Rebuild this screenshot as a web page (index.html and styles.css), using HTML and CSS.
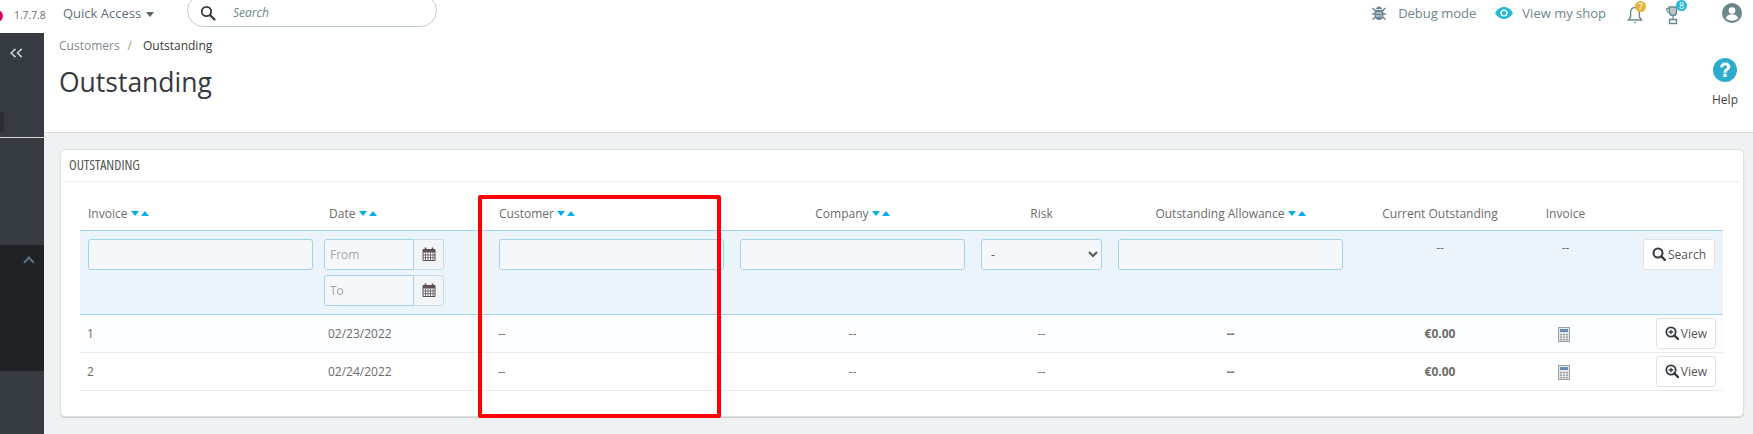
FILE: index.html
```html
<!DOCTYPE html>
<html lang="en">
<head>
<meta charset="utf-8">
<title>Outstanding</title>
<link rel="stylesheet" href="styles.css">
</head>
<body>
<div class="app">
  <header class="topbar">
    <span class="logo"></span>
    <span class="version">1.7.7.8</span>
    <span class="quick">Quick Access<span class="caret"></span></span>
    <div class="searchbox">
      <svg class="searchicon" viewBox="0 0 16 16"><circle cx="6.5" cy="6.5" r="4.7" fill="none" stroke="#363a41" stroke-width="1.8"/><path d="M10 10l4.5 4.5" stroke="#363a41" stroke-width="2.2" stroke-linecap="round"/></svg>
      <span class="searchtext">Search</span>
    </div>
    <div class="topright">
      <span class="toplink debug">
        <svg class="ico16" viewBox="0 0 16 16"><path d="M4.800 4.200C5.300 2.500 6.500 1.500 8 1.500s2.700 1 3.200 2.700z" fill="#6c868e"/><path d="M3.600 5h8.800v5.500c0 2.700-1.900 4.500-4.400 4.500s-4.400-1.800-4.400-4.500z" fill="#6c868e"/><path d="M1.500 3l3 2.500M14.500 3l-3 2.500M1 9h3M15 9h-3M1.500 14.500l3-2.500M14.500 14.500l-3-2.500" stroke="#6c868e" stroke-width="1.600"/><path d="M5 8h6M5 11h6" stroke="#fff" stroke-width=".8"/></svg>
        Debug mode
      </span>
      <span class="toplink shop">
        <svg class="ico18" viewBox="0 0 18 12"><path d="M0 6c2-3.600 5.200-6 9-6s7 2.400 9 6c-2 3.600-5.200 6-9 6s-7-2.400-9-6z" fill="#25b9d7"/><circle cx="9" cy="6" r="3.600" fill="#fff"/><circle cx="9" cy="6" r="2.200" fill="#25b9d7"/></svg>
        View my shop
      </span>
      <span class="notif bell">
        <svg class="ico16" viewBox="0 0 16 20"><path d="M8 2.500c-3 0-4.400 2.200-4.400 5v4.500L1.500 15h13l-2.100-3V7.500c0-2.800-1.400-5-4.400-5z" fill="none" stroke="#6c868e" stroke-width="1.400"/><path d="M6.500 17h3l-1.500 1.600z" fill="#6c868e"/></svg>
        <span class="badge orange">7</span>
      </span>
      <span class="notif trophy">
        <svg class="ico16" viewBox="0 0 16 20"><path d="M3 2h8l-.8 6.500C9.800 10 8 10.500 7 10.500S4.200 10 3.800 8.500z" fill="#b9c6ca" stroke="#6c868e" stroke-width="1.400"/><path d="M3 3.500H.8C.8 6 2 7.500 4 8M11 3.500h2.500M7 10.500V14" fill="none" stroke="#6c868e" stroke-width="1.200"/><path d="M3.500 14.500h7v4h-7z" fill="none" stroke="#6c868e" stroke-width="1.400"/></svg>
        <span class="badge cyan">8</span>
      </span>
      <svg class="account" viewBox="0 0 20 20"><circle cx="10" cy="10" r="10" fill="#6c868e"/><circle cx="10" cy="7.500" r="3.300" fill="#fff"/><path d="M3.800 15c1-2.600 3.400-3.700 6.200-3.700s5.200 1.100 6.200 3.700c-1.400 1.700-3.700 2.800-6.200 2.800s-4.800-1.100-6.200-2.800z" fill="#fff"/></svg>
    </div>
  </header>
  <div class="main">
    <aside class="sidebar">
      <div class="side-top">
        <svg class="collapse" viewBox="0 0 13 10"><path d="M5.500 .8L1.200 5l4.300 4.200M11.800 .8L7.500 5l4.300 4.200" fill="none" stroke="#c6ced2" stroke-width="1.700"/></svg>
        <span class="side-chip"></span>
      </div>
      <div class="side-mid"></div>
      <div class="side-dark"><span class="chev-up"></span></div>
      <div class="side-end"></div>
    </aside>
    <div class="content">
      <div class="pagehead">
        <div class="headleft">
          <div class="crumbs"><span class="crumb">Customers</span><span class="slash">/</span><span class="crumb-cur">Outstanding</span></div>
          <h1 class="title">Outstanding</h1>
        </div>
        <div class="help">
          <svg class="helpicon" viewBox="0 0 24 24"><circle cx="12" cy="12" r="12" fill="#2eacce"/><path d="M7.200 9.200C7.500 6.200 9.500 4.600 12.200 4.600c2.900 0 5 1.700 5 4.200 0 3.500-3.700 3.400-3.700 5.900h-3c0-3.900 3.500-4 3.500-5.800 0-1-.8-1.600-1.700-1.600-1.100 0-1.800.7-2 1.900z" fill="#fff"/><rect x="10.400" y="15.800" width="3.200" height="3.200" fill="#fff"/></svg>
          <span>Help</span>
        </div>
      </div>
      <div class="body">
        <section class="card">
          <h2 class="cardhead">OUTSTANDING</h2>
          <div class="cardbody">
            <table class="grid">
              <colgroup>
                <col class="c1"><col class="c2"><col class="c3"><col class="c4"><col class="c5"><col class="c6"><col class="c7"><col class="c8"><col class="c9">
              </colgroup>
              <thead>
                <tr class="heads">
                  <th>Invoice <span class="sort"><i class="down"></i><i class="up"></i></span></th>
                  <th>Date <span class="sort"><i class="down"></i><i class="up"></i></span></th>
                  <th>Customer <span class="sort"><i class="down"></i><i class="up"></i></span></th>
                  <th class="ctr">Company <span class="sort"><i class="down"></i><i class="up"></i></span></th>
                  <th class="ctr">Risk</th>
                  <th class="ctr">Outstanding Allowance <span class="sort"><i class="down"></i><i class="up"></i></span></th>
                  <th class="ctr">Current Outstanding</th>
                  <th class="ctr">Invoice</th>
                  <th></th>
                </tr>
                <tr class="filters">
                  <td><input class="field" type="text"></td>
                  <td class="datecell">
                    <div class="dategroup"><input class="field datefield" type="text" placeholder="From"><span class="addon"><svg class="cal" viewBox="0 0 14 14"><use href="#calendar"/></svg></span></div>
                    <div class="dategroup"><input class="field datefield" type="text" placeholder="To"><span class="addon"><svg class="cal" viewBox="0 0 14 14"><use href="#calendar"/></svg></span></div>
                  </td>
                  <td><input class="field" type="text"></td>
                  <td><input class="field" type="text"></td>
                  <td><select class="field pick"><option>-</option></select></td>
                  <td><input class="field" type="text"></td>
                  <td class="ctr">--</td>
                  <td class="ctr">--</td>
                  <td class="right"><button class="btn" type="button"><svg class="btnicon" viewBox="0 0 14 14"><circle cx="6" cy="6" r="4.500" fill="none" stroke="#363a41" stroke-width="2"/><path d="M9.300 9.300l3.700 3.700" stroke="#363a41" stroke-width="2.400" stroke-linecap="round"/></svg>Search</button></td>
                </tr>
              </thead>
              <tbody>
                <tr class="row odd">
                  <td>1</td><td>02/23/2022</td><td>--</td><td class="ctr">--</td><td class="ctr">--</td><td class="ctr strong">--</td><td class="ctr strong">€0.00</td>
                  <td class="ctr"><svg class="calc" viewBox="0 0 12 15"><use href="#calculator"/></svg></td>
                  <td class="right"><button class="btn" type="button"><svg class="btnicon" viewBox="0 0 14 14"><use href="#zoomin"/></svg>View</button></td>
                </tr>
                <tr class="row">
                  <td>2</td><td>02/24/2022</td><td>--</td><td class="ctr">--</td><td class="ctr">--</td><td class="ctr strong">--</td><td class="ctr strong">€0.00</td>
                  <td class="ctr"><svg class="calc" viewBox="0 0 12 15"><use href="#calculator"/></svg></td>
                  <td class="right"><button class="btn" type="button"><svg class="btnicon" viewBox="0 0 14 14"><use href="#zoomin"/></svg>View</button></td>
                </tr>
              </tbody>
            </table>
          </div>
        </section>
      </div>
    </div>
  </div>
  <div class="redbox"></div>
</div>
<svg class="defs" width="0" height="0">
  <symbol id="calendar" viewBox="0 0 14 14">
    <path d="M1 2.500h12v11H1z" fill="#fff" stroke="#5a4f55" stroke-width="1"/>
    <path d="M1 2.500h12v3H1z" fill="#5a4f55"/>
    <path d="M3.500 5.500v8M6 5.500v8M8.500 5.500v8M11 5.500v8M1 8h12M1 10.700h12" stroke="#5a4f55" stroke-width=".8"/>
    <path d="M3.500 .5v3M10.500 .5v3" stroke="#5a4f55" stroke-width="1.600"/>
  </symbol>
  <symbol id="calculator" viewBox="0 0 12 15">
    <rect x=".5" y=".5" width="11" height="14" fill="#e3e6e9" stroke="#9aa0a6"/>
    <rect x="2" y="2" width="8" height="3" fill="#6a8bb8"/>
    <path d="M2 7h2v1.300H2zM5 7h2v1.300H5zM8 7h2v1.300H8zM2 9.500h2v1.300H2zM5 9.500h2v1.300H5zM8 9.500h2v1.300H8zM2 12h2v1.300H2zM5 12h2v1.300H5zM8 12h2v1.300H8z" fill="#8f959b"/>
  </symbol>
  <symbol id="zoomin" viewBox="0 0 14 14">
    <circle cx="6" cy="6" r="4.700" fill="none" stroke="#363a41" stroke-width="1.800"/>
    <path d="M9.300 9.300l3.700 3.700" stroke="#363a41" stroke-width="2.400" stroke-linecap="round"/>
    <path d="M3.700 6h4.600M6 3.700v4.600" stroke="#363a41" stroke-width="1.300"/>
  </symbol>
</svg>
</body>
</html>
```
FILE: styles.css
```css
* { box-sizing: border-box; }
html, body { margin: 0; padding: 0; height: 100%; overflow: hidden; }
body { font-family: "Open Sans", sans-serif; font-size: 12px; color: #6c6c6c; background: #eff1f2; }
.app { position: relative; width: 1753px; height: 434px; overflow: hidden; }
.defs { position: absolute; }

/* top bar */
.topbar { height: 33px; background: #fff; display: flex; align-items: center; padding-bottom: 4px; overflow: hidden; color: #6c868e; }
.logo { width: 12px; height: 12px; border-radius: 50%; background: #df0067; margin-left: -9px; margin-top: 2px; flex: none; }
.version { margin-left: 11px; font-size: 10.300px; color: #6d6d6d; margin-top: 1px; width: 49px; }
.quick { font-size: 13px; color: #5f7078; width: 124px; margin-top: -3px; display: flex; align-items: center; }
.caret { width: 0; height: 0; border: 4.500px solid transparent; border-top: 5px solid #55656c; border-bottom: 0; margin-left: 5px; margin-top: 2px; }
.searchbox { width: 250px; height: 33px; margin-top: -8px; border: 1px solid #bbcdd2; border-radius: 17px; display: flex; align-items: center; padding: 8px 0 0 12px; flex: none; }
.searchicon { width: 16px; height: 16px; flex: none; margin-top: -4px; }
.searchtext { font-style: italic; font-size: 12px; color: #6c868e; margin-left: 17px; margin-top: -5px; }
.topright { margin-left: auto; display: flex; align-items: center; height: 29px; margin-right: 11px; }
.toplink { display: flex; align-items: center; font-size: 13px; color: #6c868e; white-space: nowrap; }
.ico16 { width: 16px; height: 16px; flex: none; }
.ico18 { width: 18px; height: 12px; flex: none; }
.debug .ico16 { margin-right: 11px; }
.debug { margin-right: 19px; margin-top: -3px; }
.shop .ico18 { margin-right: 9px; }
.shop { margin-right: 21px; margin-top: -3px; }
.notif { position: relative; width: 16px; height: 20px; display: flex; }
.notif .ico16 { width: 16px; height: 20px; }
.bell { margin-right: 23px; }
.trophy { margin-right: 40px; }
.badge { position: absolute; top: -4px; left: 8px; width: 11px; height: 11px; border-radius: 50%; color: #fff; font-size: 9px; line-height: 11px; text-align: center; }
.orange { background: #eab03c; }
.cyan { background: #25b9d7; left: 10px; top: -5px; }
.account { width: 20px; height: 20px; margin-top: -3px; }

/* main */
.main { display: flex; height: 401px; }
.sidebar { width: 44px; flex: none; display: flex; flex-direction: column; background: #363a41; }
.side-top { height: 105px; position: relative; border-bottom: 1px solid #d5d7d9; }
.collapse { position: absolute; left: 10px; top: 15px; width: 13px; height: 10px; }
.side-chip { position: absolute; left: 0; top: 79px; width: 4px; height: 20px; background: #2a2d33; border-radius: 0 2px 2px 0; }
.side-mid { height: 107px; }
.side-dark { height: 126px; background: #202226; position: relative; }
.chev-up { position: absolute; left: 25px; top: 13px; width: 8px; height: 8px; border-left: 2px solid #5b7680; border-top: 2px solid #5b7680; transform: rotate(45deg); }
.side-end { flex: 1; }

.content { flex: 1; min-width: 0; display: flex; flex-direction: column; }
.pagehead { height: 100px; background: #fff; border-bottom: 1px solid #d9dbdd; display: flex; justify-content: space-between; padding: 0 15px 0 15px; }
.crumbs { font-size: 12px; line-height: 16px; margin-top: 5px; display: flex; }
.crumb { color: #7e8a90; }
.slash { color: #9aa56a; margin: 0 11px 0 8px; }
.crumb-cur { color: #363a41; }
.title { margin: 10px 0 0; font-size: 26.500px; line-height: 36px; font-weight: 400; color: #363a41; }
.help { width: 30px; margin-top: 25px; display: flex; flex-direction: column; align-items: center; font-size: 12px; color: #444; margin-right: -2px; }
.helpicon { width: 24px; height: 24px; flex: none; margin-bottom: 9px; }

.body { padding: 16px 9px 0 16px; }
.card { height: 268px; background: #fff; border: 1px solid #dbe0e2; border-radius: 5px; box-shadow: 0 1px 1px #ccc; padding: 0 3px; }
.cardhead { margin: 0; height: 32px; line-height: 30px; padding-left: 5px; border-bottom: 1px solid #eceeef; font-size: 14px; font-stretch: 75%; font-weight: 500; color: #555; }
.cardbody { padding: 15px 0 0 16px; }

/* table */
.grid { width: 1643px; border-collapse: collapse; table-layout: fixed; font-size: 12px; }
.c1 { width: 241px; } .c2 { width: 170px; } .c3 { width: 241px; } .c4 { width: 241px; } .c5 { width: 137px; }
.c6 { width: 241px; } .c7 { width: 178px; } .c8 { width: 73px; } .c9 { width: 121px; }
.grid th { height: 33px; padding: 0 8px; font-weight: 400; text-align: left; white-space: nowrap; color: #6c6c6c; }
.grid th.ctr, .ctr { text-align: center; }
.sort { display: inline-flex; gap: 2px; vertical-align: 2px; }
.sort i { width: 0; height: 0; border-left: 4.500px solid transparent; border-right: 4.500px solid transparent; }
.down { border-top: 5px solid #00aff0; }
.up { border-bottom: 5px solid #00aff0; }
.filters { background: #ebf4fb; border-top: 1px solid #a3d3ec; border-bottom: 1px solid #a3d3ec; }
.filters td { height: 84px; padding: 8px 8px 0; vertical-align: top; line-height: 18px; }
.filters .datecell { padding: 8px 4px 0 3px; }
.field { display: block; width: 100%; height: 31px; background: #f4f8fa; border: 1px solid #a3d3ec; border-radius: 3px; padding: 0 5px; font: 12px "Open Sans", sans-serif; color: #555; outline: none; }
.pick { background: #f4f8fa; }
.dategroup { display: flex; width: 120px; height: 31px; }
.dategroup + .dategroup { margin-top: 5px; }
.datefield { flex: 1; min-width: 0; border-radius: 3px 0 0 3px; }
.datefield::placeholder { color: #a5a5a5; opacity: 1; }
.addon { width: 30px; flex: none; height: 31px; background: #f1f5f7; border: 1px solid #c9dbe3; border-left: 0; border-radius: 0 3px 3px 0; display: flex; align-items: center; justify-content: center; }
.cal { width: 14px; height: 14px; }
.right { text-align: right; }
.btn { display: inline-flex; align-items: center; height: 31px; padding: 0 8px; background: #fff; border: 1px solid #dfe3e6; border-radius: 3px; font: 12px "Open Sans", sans-serif; color: #555; }
.btnicon { width: 14px; height: 14px; margin-right: 2px; flex: none; }
.row td { height: 38px; padding: 0 8px; border-bottom: 1px solid #e9ebed; color: #6c6c6c; }
.row td:nth-child(-n+3) { padding-left: 7px; }
.row td.right { padding-right: 7px; }
.odd { background: #fbfdfe; }
.strong { font-weight: 700; }
.calc { width: 12px; height: 15px; vertical-align: middle; margin-right: 4px; }

/* annotation drawn over the screenshot */
.redbox { position: absolute; left: 478px; top: 195px; width: 243px; height: 223px; border: 4px solid #ff0000; border-radius: 2px; pointer-events: none; }
```
